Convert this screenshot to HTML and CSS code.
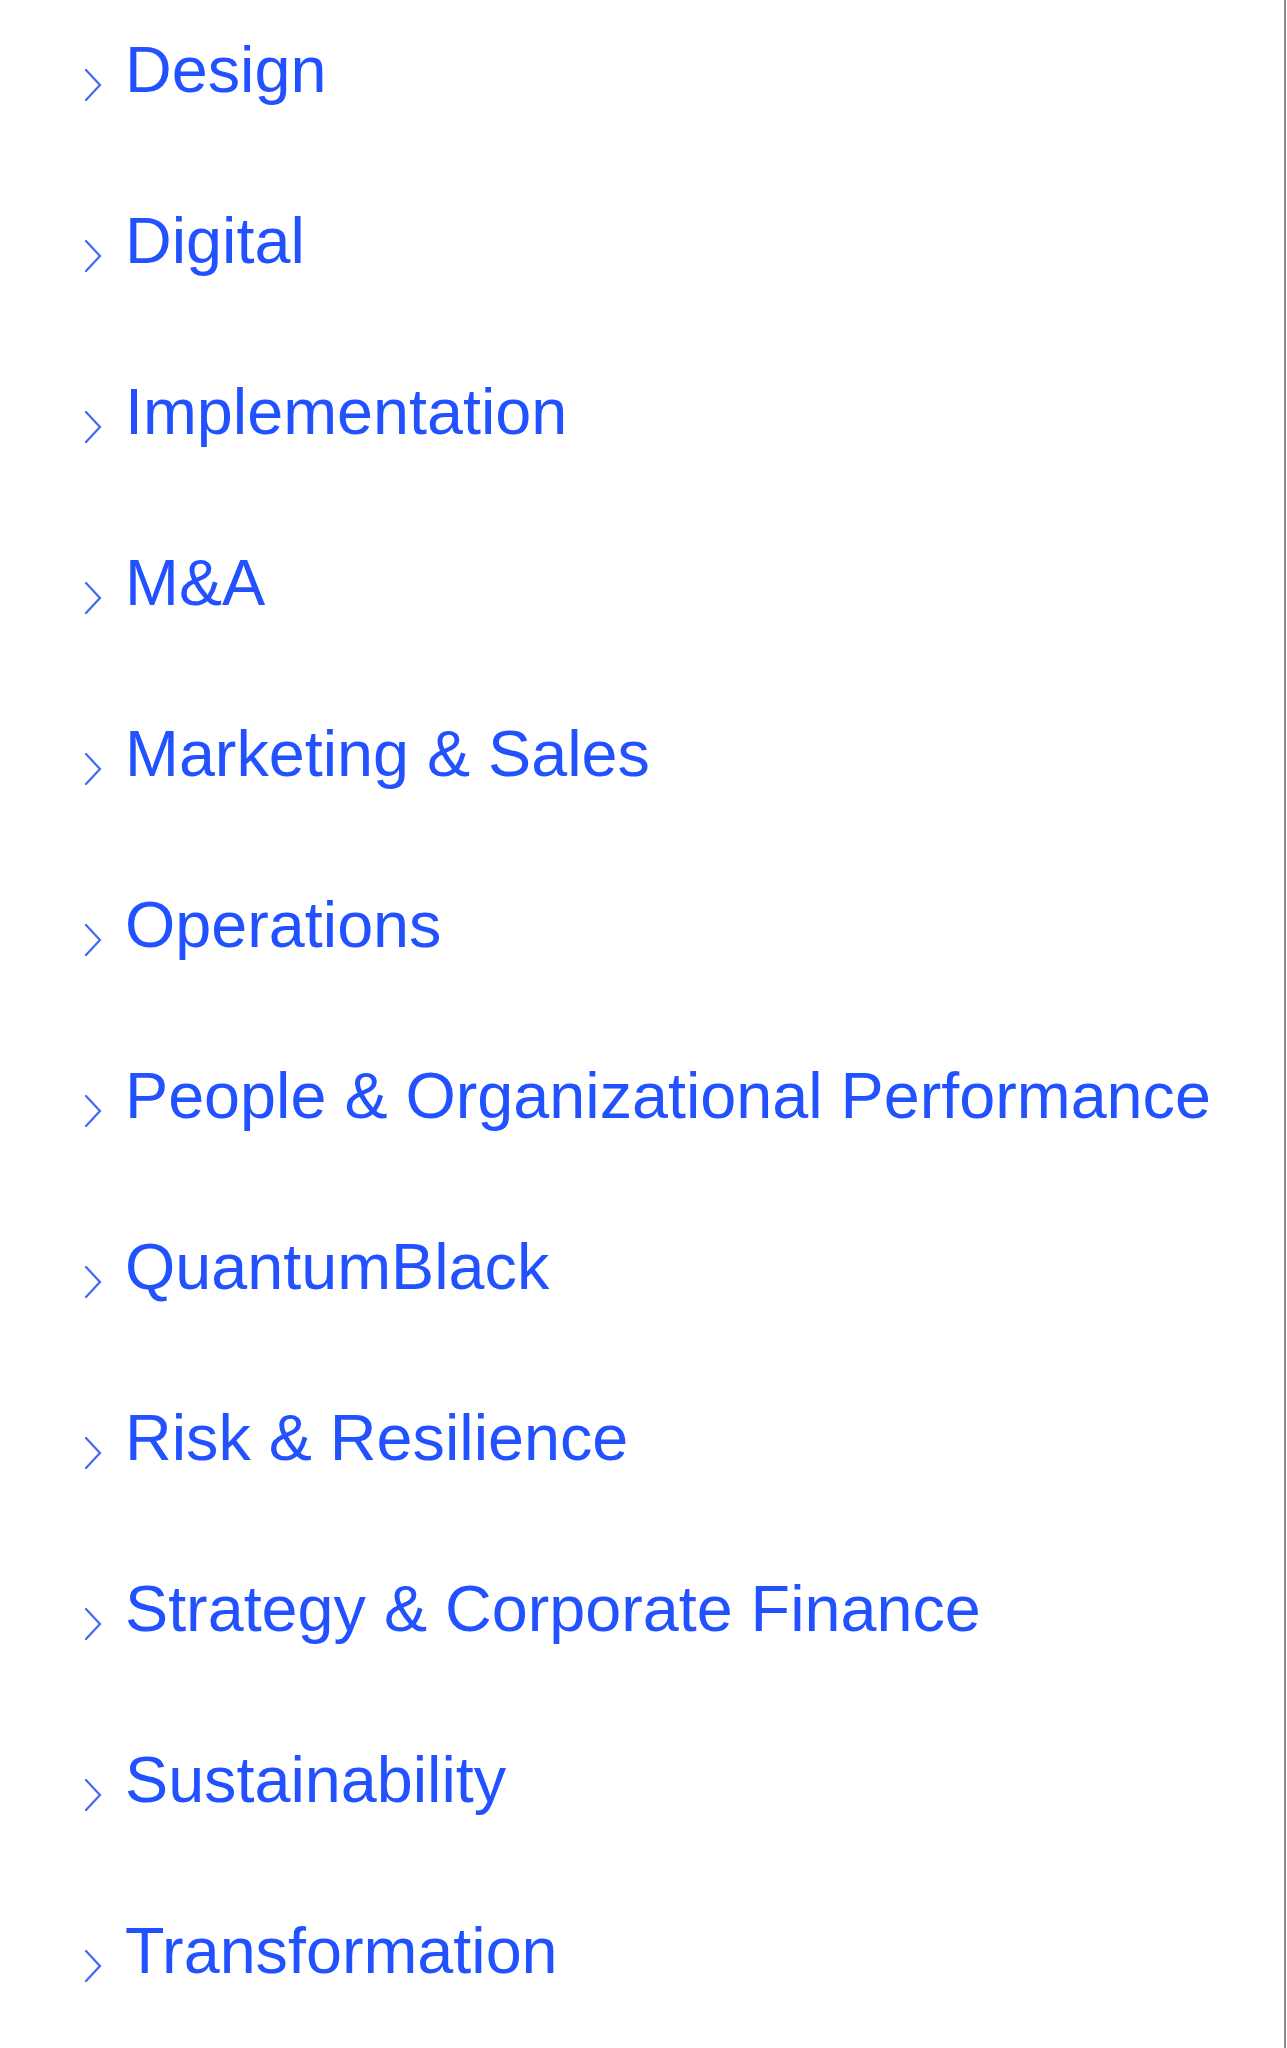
FILE: index.html
```html
<!DOCTYPE html>
<html lang="en">
<head>
<meta charset="utf-8">
<title>Capabilities</title>
<link rel="stylesheet" href="styles.css">
</head>
<body>
<div class="panel">
  <ul class="links">
    <li><svg class="chev" viewBox="0 0 18 32"><path d="M2 1 L16 16 L2 31"/></svg><a href="#">Design</a></li>
    <li><svg class="chev" viewBox="0 0 18 32"><path d="M2 1 L16 16 L2 31"/></svg><a href="#">Digital</a></li>
    <li><svg class="chev" viewBox="0 0 18 32"><path d="M2 1 L16 16 L2 31"/></svg><a href="#">Implementation</a></li>
    <li><svg class="chev" viewBox="0 0 18 32"><path d="M2 1 L16 16 L2 31"/></svg><a href="#">M&amp;A</a></li>
    <li><svg class="chev" viewBox="0 0 18 32"><path d="M2 1 L16 16 L2 31"/></svg><a href="#">Marketing &amp; Sales</a></li>
    <li><svg class="chev" viewBox="0 0 18 32"><path d="M2 1 L16 16 L2 31"/></svg><a href="#">Operations</a></li>
    <li><svg class="chev" viewBox="0 0 18 32"><path d="M2 1 L16 16 L2 31"/></svg><a href="#">People &amp; Organizational Performance</a></li>
    <li><svg class="chev" viewBox="0 0 18 32"><path d="M2 1 L16 16 L2 31"/></svg><a href="#">QuantumBlack</a></li>
    <li><svg class="chev" viewBox="0 0 18 32"><path d="M2 1 L16 16 L2 31"/></svg><a href="#">Risk &amp; Resilience</a></li>
    <li><svg class="chev" viewBox="0 0 18 32"><path d="M2 1 L16 16 L2 31"/></svg><a href="#">Strategy &amp; Corporate Finance</a></li>
    <li><svg class="chev" viewBox="0 0 18 32"><path d="M2 1 L16 16 L2 31"/></svg><a href="#">Sustainability</a></li>
    <li><svg class="chev" viewBox="0 0 18 32"><path d="M2 1 L16 16 L2 31"/></svg><a href="#">Transformation</a></li>
  </ul>
</div>
</body>
</html>
```
FILE: styles.css
```css
html, body {
  margin: 0;
  padding: 0;
  background: #ffffff;
  overflow: hidden;
}

.panel {
  box-sizing: border-box;
  width: 1286px;
  height: 2048px;
  border-right: 2px solid #8c8c8c;
  background: #ffffff;
}

.links {
  list-style: none;
  margin: 0;
  padding: 32px 0 0 84px;
  font-family: "Liberation Sans", Arial, sans-serif;
  font-size: 64.7px;
  line-height: 75px;
}

.links li {
  display: flex;
  align-items: baseline;
  gap: 23px;
  margin-bottom: 96px;
  white-space: nowrap;
}

.links a {
  color: #2251ff;
  text-decoration: none;
}

.chev {
  flex: none;
  width: 18px;
  height: 32px;
  align-self: flex-end;
  position: relative;
  top: -6px;
}

.chev path {
  fill: none;
  stroke: #4167f6;
  stroke-width: 2.2;
  stroke-linecap: round;
  stroke-linejoin: miter;
}
```
